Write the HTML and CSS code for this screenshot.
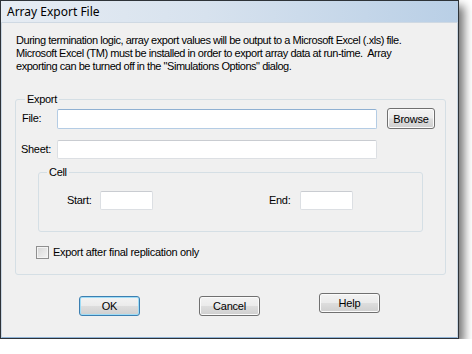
FILE: index.html
```html
<!DOCTYPE html>
<html lang="en">
<head>
    <meta charset="UTF-8">
    <title>Array Export File</title>
    <link rel="stylesheet" href="styles.css">
</head>
<body>
    <div class="window">
        <div class="titlebar">Array Export File</div>
        <div class="client">
            <p class="intro">During termination logic, array export values will be output to a Microsoft Excel (.xls) file.<br>Microsoft Excel (TM) must be installed in order to export array data at run-time.&nbsp; Array<br>exporting can be turned off in the "Simulations Options" dialog.</p>

            <fieldset class="group groupExport">
                <legend>Export</legend>
                <div class="row rowFile">
                    <label class="lbl">File:</label>
                    <span class="textbox textboxFocus wide"></span>
                    <button class="btn btnBrowse">Browse</button>
                </div>
                <div class="row rowSheet">
                    <label class="lbl">Sheet:</label>
                    <span class="textbox wide"></span>
                </div>
                <fieldset class="group groupCell">
                    <legend>Cell</legend>
                    <div class="row rowCell">
                        <label class="lbl lblStart">Start:</label>
                        <span class="textbox small"></span>
                        <label class="lbl lblEnd">End:</label>
                        <span class="textbox small"></span>
                    </div>
                </fieldset>
                <label class="check"><span class="checkbox"></span>Export after final replication only</label>
            </fieldset>

            <div class="buttons">
                <button class="btn btnDefault">OK</button>
                <button class="btn">Cancel</button>
                <button class="btn btnHelp">Help</button>
            </div>
        </div>
    </div>
</body>
</html>
```

FILE: styles.css
```css
body {
    margin: 0;
    padding: 0;
    background-color: white;
    font-family: 'Liberation Sans', Arial, sans-serif;
    font-size: 11px;
    letter-spacing: -0.3px;
    color: #000;
}

.window {
    box-sizing: border-box;
    width: 459px;
    height: 339px;
    border: 1px solid #2e3338;
    display: flex;
    flex-direction: column;
    background-color: #f0f0f0;
    box-shadow: 5px 6px 9px rgba(0, 0, 0, 0.55);
}

.titlebar {
    height: 21px;
    line-height: 21px;
    padding-left: 6px;
    font-family: 'Noto Sans', sans-serif;
    font-size: 12px;
    letter-spacing: 0;
    color: #000;
    background: linear-gradient(to right, #e6ecf3 0%, #d7e2ee 45%, #b9cfe6 100%);
    border-bottom: 1px solid #cfd9e3;
}

.client {
    flex: 1;
    border-left: 1px solid #c9d6e3;
    border-right: 1px solid #c9d6e3;
    border-bottom: 1px solid #8fb3d6;
}

.intro {
    margin: 0;
    padding: 11px 0 0 14px;
    line-height: 13px;
    letter-spacing: -0.46px;
    white-space: nowrap;
}

.group {
    border: 1px solid #d5dfe5;
    border-radius: 3px;
    padding: 0;
    margin: 0;
    min-width: 0;
}

.group legend {
    padding: 0 2px;
    line-height: 13px;
}

.groupExport {
    margin: 20px 11px 0 13px;
    padding-bottom: 15px;
}

.groupExport > legend {
    margin-left: 9px;
}

.row {
    display: flex;
    align-items: center;
}

.lbl {
    line-height: 13px;
}

.rowFile {
    margin-top: 2px;
    padding-left: 6px;
}

.rowFile .lbl, .rowSheet .lbl {
    width: 35px;
}

.rowSheet {
    margin-top: 11px;
    padding-left: 5px;
}

.rowSheet .lbl {
    width: 36px;
}

.textbox {
    box-sizing: border-box;
    display: block;
    height: 19px;
    background-color: white;
    border: 1px solid #dcdfe3;
    border-top-color: #c9ccd1;
    border-radius: 2px;
}

.textboxFocus {
    height: 20px;
    border-color: #b4cce4;
    border-top-color: #8fb0d2;
}

.wide {
    width: 320px;
}

.small {
    width: 53px;
}

.btn {
    box-sizing: border-box;
    font-family: 'Liberation Sans', Arial, sans-serif;
    font-size: 11px;
    letter-spacing: -0.2px;
    color: #000;
    height: 21px;
    padding: 0;
    border: 1px solid #707070;
    border-radius: 3px;
    background: linear-gradient(#f3f3f3 0%, #ebebeb 48%, #dddddd 52%, #cfcfcf 100%);
    box-shadow: inset 0 0 0 1px #fbfbfb;
}

.btnBrowse {
    width: 48px;
    margin-left: 10px;
}

.groupCell {
    margin: 7px 22px 0 22px;
    padding-bottom: 21px;
}

.groupCell > legend {
    margin-left: 8px;
}

.rowCell {
    margin-top: 12px;
    padding-left: 28px;
}

.lblStart {
    width: 33px;
}

.lblEnd {
    width: 31px;
    margin-left: 116px;
}

.check {
    display: flex;
    align-items: center;
    margin: 14px 0 0 20px;
    line-height: 13px;
}

.checkbox {
    box-sizing: border-box;
    width: 13px;
    height: 13px;
    margin-right: 4px;
    border: 1px solid #8f8f8f;
    background: linear-gradient(135deg, #d6d6d6 0%, #f4f4f4 100%);
    box-shadow: inset 0 0 0 1px #f4f4f4;
}

.buttons {
    display: flex;
    align-items: flex-start;
    gap: 59px;
    margin-top: 21px;
    padding-left: 77px;
}

.buttons .btn {
    width: 61px;
    height: 20px;
}

.btnDefault {
    border-color: #3c7fb1;
    box-shadow: inset 0 0 0 1px #9fdcf6;
}

.btnHelp {
    margin-top: -3px;
}
```
